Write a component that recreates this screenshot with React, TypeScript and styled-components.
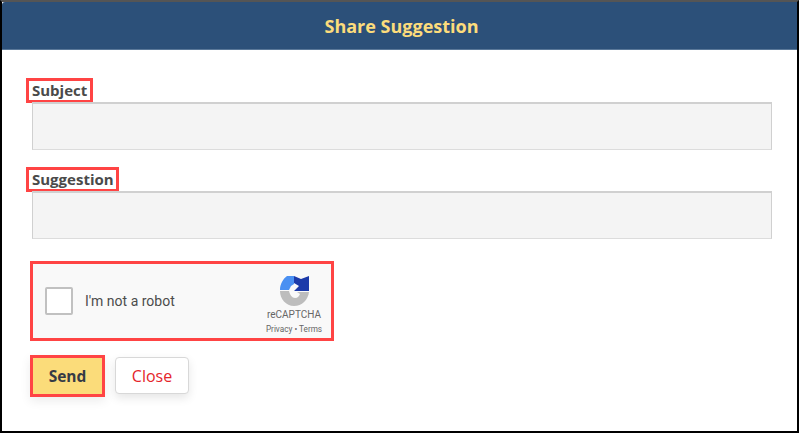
import React from "react";
import styled, { createGlobalStyle } from "styled-components";

const GlobalStyle = createGlobalStyle`
  html, body {
    margin: 0;
    padding: 0;
    background: #000;
  }
  * {
    box-sizing: border-box;
  }
`;

const Frame = styled.div`
  width: 799px;
  height: 433px;
  border: 2px solid #000;
  border-top-color: #555;
  background: #fff;
  font-family: "Open Sans", "Liberation Sans", sans-serif;
  overflow: hidden;
`;

const Header = styled.header`
  height: 48px;
  padding-left: 4px;
  background: #2c5079;
  border-bottom: 1px solid #5a7899;
  border-top-left-radius: 3px;
  color: #fcdc7c;
  font-size: 18px;
  font-weight: 700;
  display: flex;
  align-items: center;
  justify-content: center;
`;

const Form = styled.form`
  padding: 28px 25px 0 24px;
  display: flex;
  flex-direction: column;
`;

const Field = styled.div`
  display: flex;
  flex-direction: column;
  align-items: flex-start;
  margin-bottom: 17px;
`;

const Label = styled.label`
  display: block;
  height: 25px;
  padding: 0 2.500px 0 3px;
  border: 3px solid #ff4444;
  color: #4a4a4a;
  font-size: 15px;
  font-weight: 700;
  line-height: 18px;
  margin-bottom: -1px;
`;

const Input = styled.input`
  display: block;
  width: 740px;
  height: 48px;
  margin-left: 6px;
  background: #f4f4f4;
  border: 1px solid #d0d0d0;
  border-top-width: 2px;
  border-bottom-color: #dcdcdc;
  outline: none;
`;

const CaptchaOutline = styled.div`
  width: 304px;
  height: 80px;
  margin: 5px 0 14px 4px;
  border: 3px solid #ff4444;
  background: #f9f9f9;
  display: flex;
  align-items: center;
  font-family: "Roboto", "Liberation Sans", sans-serif;
`;

const CheckBox = styled.span`
  width: 28px;
  height: 28px;
  margin-left: 12px;
  background: #fff;
  border: 2px solid #c1c1c1;
  border-radius: 2px;
`;

const CaptchaLabel = styled.span`
  margin-left: 12px;
  color: #4c4c4c;
  font-size: 14px;
  flex: 1;
`;

const Brand = styled.div`
  width: 70px;
  margin-right: 2px;
  padding-top: 7px;
  display: flex;
  flex-direction: column;
  align-items: center;
  color: #666;
`;

const BrandName = styled.span`
  font-size: 10px;
  line-height: 12px;
  margin-top: 3px;
`;

const BrandLinks = styled.span`
  font-size: 8.2px;
  line-height: 12px;
  margin-top: 2px;
  white-space: nowrap;
`;

const Actions = styled.div`
  display: flex;
  align-items: flex-start;
  gap: 10px;
  margin-left: 4px;
`;

const SendButton = styled.button`
  width: 75px;
  height: 42px;
  background: #fbdc7a;
  border: 3px solid #ff4444;
  color: #363b45;
  font-family: "Open Sans", "Liberation Sans", sans-serif;
  font-size: 15.5px;
  font-weight: 700;
  padding: 0;
  box-shadow: 0 4px 10px rgba(0, 0, 0, 0.08);
`;

const CloseButton = styled.button`
  width: 74px;
  height: 37px;
  margin-top: 2px;
  background: #fff;
  border: 1px solid #d8d8d8;
  border-radius: 4px;
  color: #e5252a;
  font-family: "Open Sans", "Liberation Sans", sans-serif;
  font-size: 16px;
  padding: 0;
  box-shadow: 0 4px 10px rgba(0, 0, 0, 0.1);
`;

function CaptchaLogo() {
  return (
    <svg width="30" height="31" viewBox="0 0 30 31">
      <path d="M15 1 L15 9 L12 11 L10 15 L1 15 C1 9 4 4 8 1 Z" fill="#4a90f2" />
      <path d="M15 1 L22 4 L30 1 L30 16 L15 16 L20 11 L15 8 Z" fill="#1c3aa9" />
      <path d="M1 16 L10 16 C11 20 13 23 16 23 C19 23 20 21 21 19 L18 17 L30 17 C29 25 23 31 15 31 C7 31 1 24 1 16 Z" fill="#bdbdbd" />
    </svg>
  );
}

export default function App() {
  return (
    <>
      <GlobalStyle />
      <Frame>
        <Header>Share Suggestion</Header>
        <Form>
          <Field>
            <Label>Subject</Label>
            <Input type="text" />
          </Field>
          <Field>
            <Label>Suggestion</Label>
            <Input type="text" />
          </Field>
          <CaptchaOutline>
            <CheckBox />
            <CaptchaLabel>I'm not a robot</CaptchaLabel>
            <Brand>
              <CaptchaLogo />
              <BrandName>reCAPTCHA</BrandName>
              <BrandLinks>Privacy • Terms</BrandLinks>
            </Brand>
          </CaptchaOutline>
          <Actions>
            <SendButton type="button">Send</SendButton>
            <CloseButton type="button">Close</CloseButton>
          </Actions>
        </Form>
      </Frame>
    </>
  );
}
